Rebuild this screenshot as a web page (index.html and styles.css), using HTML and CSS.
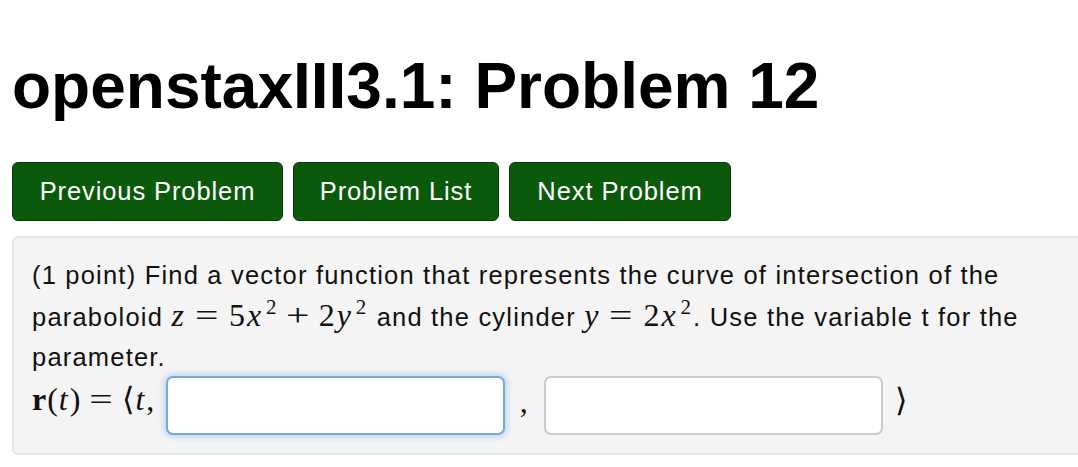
FILE: index.html
```html
<!DOCTYPE html>
<html>
<head>
<meta charset="utf-8">
<link rel="stylesheet" href="styles.css">
</head>
<body>
<h1 class="title">openstaxIII3.1: Problem 12</h1>
<div class="nav">
  <a class="btn btn-prev">Previous Problem</a>
  <a class="btn btn-list">Problem List</a>
  <a class="btn btn-next">Next Problem</a>
</div>
<div class="problem">
  <p class="text">(1 point) Find a vector function that represents the curve of intersection of the paraboloid <span class="m"><i>z</i><span class="op">=</span>5<i>x</i><sup>2</sup><span class="op op-bin">+</span>2<i>y</i><sup>2</sup></span> and the cylinder <span class="m"><i>y</i><span class="op">=</span>2<i>x</i><sup>2</sup></span>. Use the variable t for the parameter.</p>
  <div class="answer">
    <span class="m lead"><b>r</b>(<i>t</i>)<span class="op">=</span>⟨<i>t</i>,</span>
    <input class="field field-focus" type="text">
    <span class="m comma">,</span>
    <input class="field" type="text">
    <span class="m close">⟩</span>
  </div>
</div>
</body>
</html>
```
FILE: styles.css
```css
html, body {
  margin: 0;
  padding: 0;
  background: #ffffff;
}
body {
  padding: 0 0 0 12px;
  font-family: "Liberation Sans", Arial, sans-serif;
  color: #111;
  overflow: hidden;
}
.title {
  margin: 54px 0 0 0;
  font-size: 64px;
  line-height: 64px;
  font-weight: bold;
  color: #000;
}
.nav {
  display: flex;
  gap: 10px;
  margin-top: 44px;
}
.btn {
  display: flex;
  align-items: center;
  justify-content: center;
  box-sizing: border-box;
  height: 59px;
  background: #0b5a0b;
  border: 1px solid #063d06;
  border-radius: 6px;
  color: #fff;
  font-size: 25.5px;
  letter-spacing: 0.9px;
}
.btn-prev { width: 271px; }
.btn-list { width: 206px; }
.btn-next { width: 222px; }
.problem {
  margin-top: 15px;
  box-sizing: border-box;
  width: 1080px;
  height: 219px;
  background: #f4f4f4;
  border: 2px solid #e4e4e4;
  border-radius: 6px;
  padding: 17px 18px 0 18px;
}
.text {
  margin: 0;
  font-size: 25.5px;
  letter-spacing: 1.2px;
  line-height: 40px;
  color: #111;
}
.m {
  font-family: "Liberation Serif", "Times New Roman", serif;
  font-size: 32px;
  letter-spacing: 2px;
}
.m i {
  margin-right: 1px;
}
.m sup {
  font-size: 21px;
  line-height: 0;
  vertical-align: 12px;
  margin-left: 2px;
}
.op {
  display: inline-block;
  margin: 0 11px;
  transform: scaleX(1.3);
}
.op-bin {
  margin: 0 10px;
}
.answer {
  display: flex;
  align-items: center;
  height: 59px;
  margin-top: -1px;
}
.lead {
  margin-right: 11px;
  padding-bottom: 14px;
  letter-spacing: 1px;
}
.field {
  box-sizing: border-box;
  width: 339px;
  height: 59px;
  border: 2px solid #cbcbcb;
  border-radius: 7px;
  background: #fff;
  margin: 0;
  padding: 0;
}
.field-focus {
  border-color: #7aa7d8;
  box-shadow: 0 0 6px 2px rgba(120, 170, 230, 0.45);
}
.comma {
  width: 39px;
  text-align: center;
  padding-bottom: 8px;
}
.close {
  margin-left: 12px;
  padding-bottom: 12px;
}
```
